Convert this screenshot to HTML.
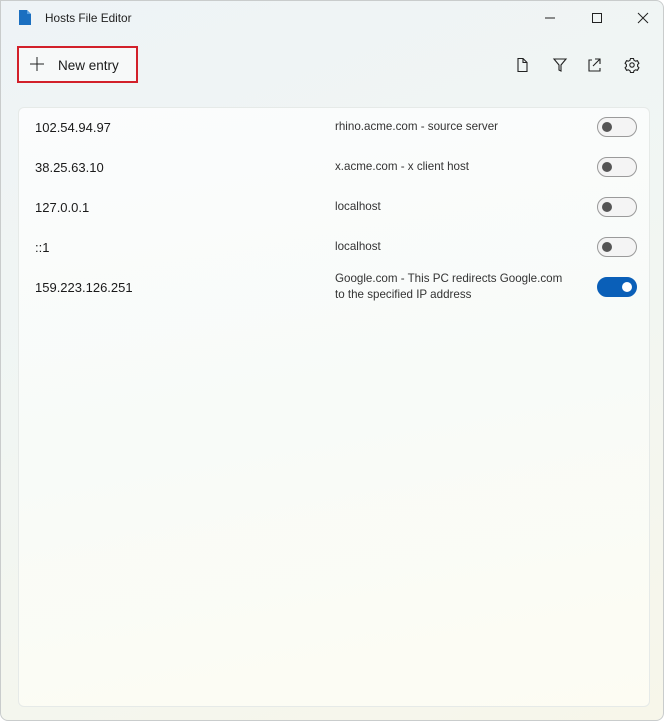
<!DOCTYPE html>
<html><head><style>
html,body{margin:0;padding:0;width:666px;height:724px;overflow:hidden;background:#fff;}
body{font-family:"Liberation Sans",sans-serif;color:#1a1a1a;position:relative;}
.win{position:absolute;left:0;top:0;width:664px;height:721px;border:1px solid #c9cccc;border-radius:0 8px 8px 8px;background:linear-gradient(160deg,#eef3f6 0%,#f1f6f3 45%,#f7f6ea 100%);box-sizing:border-box;}
.title{position:absolute;left:44px;top:10px;font-size:11.8px;color:#222;}
.panel{position:absolute;left:17px;top:106px;width:632px;height:600px;border:1px solid #e6eae8;border-radius:6px;background:linear-gradient(170deg,#fbfcfd 0%,#f8fbf8 50%,#fdfcf3 100%);box-sizing:border-box;}
.btn{position:absolute;left:16px;top:45px;width:121px;height:37px;border:2px solid #d2202a;box-sizing:border-box;background:#f7f9f9;}
.btn span{position:absolute;left:39px;top:10px;font-size:13.5px;}
.ip{position:absolute;left:34px;font-size:13px;}
.h{position:absolute;left:334px;font-size:11.6px;color:#333;line-height:16px;}
.tg{position:absolute;left:596px;width:40px;height:20px;border:1px solid #9a9a9a;border-radius:10px;box-sizing:border-box;background:#f4f4f4;}
.tg::after{content:"";position:absolute;left:4px;top:4px;width:10px;height:10px;border-radius:50%;background:#555;}
.tg.on{background:#0a5fb8;border-color:#0a5fb8;}
.tg.on::after{left:24px;background:#fff;}
svg{position:absolute;}
</style></head><body>
<div class="win">
<svg style="left:17px;top:8px" width="14" height="17" viewBox="0 0 14 17"><path d="M1 1h8l4 4v11H1z" fill="#1b6fc0"/><path d="M9 1v4h4" fill="#5aa0e0"/></svg>
<div class="title">Hosts File Editor</div>
<svg style="left:540px;top:10px" width="110" height="14" viewBox="0 0 110 14" stroke="#222" fill="none" stroke-width="1"><path d="M4 7h10"/><rect x="51.5" y="2.5" width="9" height="9"/><path d="M97 2l10 10M107 2l-10 10"/></svg>
<div class="btn"><svg style="left:11px;top:9px" width="14" height="14" viewBox="0 0 14 14" stroke="#222"><path d="M7 0v14M0 7h14"/></svg><span>New entry</span></div>
<svg style="left:514px;top:56px" width="130" height="16" viewBox="0 0 130 16" stroke="#222" fill="none" stroke-width="1.1"><path d="M3 1.5h5l4 4v9H3z"/><path d="M8 1.5v4h4"/><path d="M39 2h12l-5 6v6l-2-1v-5z"/><path d="M77 3h-3v11h11v-3M80 2h5v5M85 2l-7 7"/><circle cx="117" cy="8" r="2.2"/><path d="M115.5 1.5h3l.5 1.8 1.6.9 1.8-.5 1.5 2.6-1.3 1.3v1.8l1.3 1.3-1.5 2.6-1.8-.5-1.6.9-.5 1.8h-3l-.5-1.8-1.6-.9-1.8.5-1.5-2.6 1.3-1.3V7.6l-1.3-1.3 1.5-2.6 1.8.5 1.6-.9z"/></svg>
<div class="panel"></div>
<div class="ip" style="top:119px">102.54.94.97</div><div class="h" style="top:118px">rhino.acme.com - source server</div><div class="tg" style="top:116px"></div>
<div class="ip" style="top:159px">38.25.63.10</div><div class="h" style="top:158px">x.acme.com - x client host</div><div class="tg" style="top:156px"></div>
<div class="ip" style="top:199px">127.0.0.1</div><div class="h" style="top:198px">localhost</div><div class="tg" style="top:196px"></div>
<div class="ip" style="top:239px">::1</div><div class="h" style="top:238px">localhost</div><div class="tg" style="top:236px"></div>
<div class="ip" style="top:279px">159.223.126.251</div><div class="h" style="top:270px">Google.com - This PC redirects Google.com<br>to the specified IP address</div><div class="tg on" style="top:276px"></div>
</div>
</body></html>
